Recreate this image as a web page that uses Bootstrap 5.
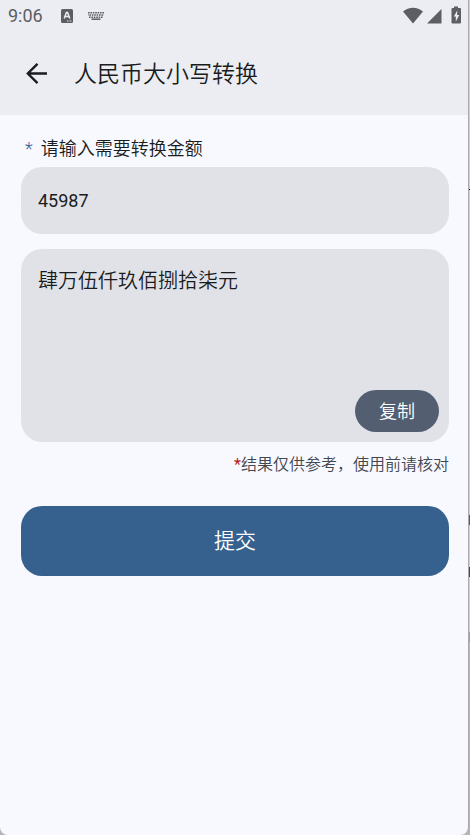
<!DOCTYPE html>
<html lang="zh-CN">
<head>
<meta charset="utf-8">
<meta name="viewport" content="width=device-width, initial-scale=1">
<title>人民币大小写转换</title>
<link rel="stylesheet" href="https://cdn.jsdelivr.net/npm/bootstrap@5.3.0/dist/css/bootstrap.min.css">
<style>
  body { background: #c9cacc; color: #191c20; font-family: Roboto, "Noto Sans CJK SC", sans-serif; }
  .backdrop { padding-right: 1px; background: linear-gradient(#d0d1d3 189px, #111 189px 190px, #d0d1d3 190px 515px, #4d6070 515px 525px, #d0d1d3 525px 567px, #33506b 567px 577px, #d0d1d3 577px 632px, #a0a1a3 632px 642px, #b4b6b8 642px); }
  .screen { background: #f8f9ff; border-right: 1px solid #a9aaad; border-radius: 0 0 8px 8px; }
  .top-area { background: #ecedf2; }
  .status-bar { height: 32px; padding: 0 6px 0 8px; color: #5c5e63; font-size: 18px; line-height: 32px; }
  .app-bar { height: 83px; padding: 0 21px; gap: 21px; }
  .app-title { font-size: 23px; line-height: 32px; font-weight: 350; padding-top: 2px; }
  .back-btn { color: #191c20; width: 32px; height: 32px; }
  .content { padding: 20px 19px 24px 21px; font-weight: 350; }
  .field-label { font-size: 18px; line-height: 28px; padding-left: 4px; gap: 8px; margin-bottom: 4px; }
  .star { color: #36618e; }
  .field, .field:focus { background: #e1e2e7; color: #191c20; border-radius: 21px; box-shadow: none; }
  .amount { height: 67px; padding: 16px 17px; font-size: 18px; margin-bottom: 15px; }
  .result, .result:focus { height: 193px; padding: 17px; font-size: 20px; line-height: 30px; resize: none; font-weight: 350; }
  .copy-btn, .copy-btn:hover { right: 10px; bottom: 10px; width: 84px; height: 42px; background: #535f70; color: #fff; font-size: 18px; font-weight: 350; }
  .note { font-size: 16px; line-height: 24px; margin: 11px 0 29px; color: #43474e; }
  .note-star { color: #ba1a1a; font-weight: 400; }
  .submit-btn, .submit-btn:hover { height: 70px; padding: 8px 0 6px; background: #36618e; color: #fff; font-size: 21px; font-weight: 350; border-radius: 21px; }
</style>
</head>
<body>
<div class="backdrop min-vh-100">
<div class="screen min-vh-100">
  <header class="top-area">
    <div class="status-bar d-flex align-items-center">
      <span>9:06</span>
      <svg class="ms-3" width="16" height="14" viewBox="0 0 16 14" aria-hidden="true">
        <rect x="2" y="0" width="12" height="14" rx="1.5" fill="#5c5e63"/>
        <path d="M5.200 9.500 7.400 3.500h1.200l2.200 6M6 7.500h4" fill="none" stroke="#ecedf2" stroke-width="1.5"/>
        <path d="M8 12h5" stroke="#ecedf2" stroke-width="1" stroke-dasharray="1 .6"/>
      </svg>
      <svg class="ms-2 me-auto" width="24" height="14" viewBox="0 0 24 14" aria-hidden="true">
        <g stroke="#5c5e63" stroke-width="1.5" fill="none">
          <path d="M5 3.750h16" stroke-dasharray="1.6 .8"/>
          <path d="M5 6h16" stroke-dasharray="1.6 .8" stroke-dashoffset="1"/>
          <path d="M6 8.200h14" stroke-dasharray="1.6 .8"/>
          <path d="M8.500 10.200h9"/>
        </g>
      </svg>
      <svg width="60" height="20" viewBox="0 0 60 20" fill="#5c5e63" aria-hidden="true">
        <path d="M1 5.500C6.500.4 15.500.4 21 5.500L11 17.500Z"/>
        <path d="M39.500 3V17.500H25Z"/>
        <path d="M52 .5h4V2h2q1 0 1 1V16.500q0 1-1 1h-7.500q-1 0-1-1V3q0-1 1-1H52Z"/>
        <path d="M55.300 4.500 51.800 10.500H53.800V15.500L57.300 9H55.100Z" fill="#ecedf2"/>
      </svg>
    </div>
    <div class="app-bar d-flex align-items-center">
      <button type="button" class="back-btn btn p-0 border-0 d-flex align-items-center justify-content-center" aria-label="返回">
        <svg width="22" height="22" viewBox="0 0 22 22" fill="none" stroke="currentColor" stroke-width="2.400" aria-hidden="true">
          <path d="M21 10.500H2M11.500.8 1.800 10.500l9.700 9.700"/>
        </svg>
      </button>
      <h1 class="app-title m-0">人民币大小写转换</h1>
    </div>
  </header>
  <main class="content">
    <form>
      <label for="amount" class="field-label d-flex"><span class="star">*</span><span>请输入需要转换金额</span></label>
      <input id="amount" type="text" inputmode="decimal" class="form-control border-0 field amount" value="45987">
      <div class="position-relative">
        <textarea id="result" class="form-control border-0 field result" aria-label="转换结果" readonly>肆万伍仟玖佰捌拾柒元</textarea>
        <button type="button" class="copy-btn btn rounded-pill border-0 p-0 position-absolute">复制</button>
      </div>
      <p class="note text-end"><span class="note-star">*</span>结果仅供参考，使用前请核对</p>
      <button type="submit" class="submit-btn btn border-0 w-100">提交</button>
    </form>
  </main>
</div>
</div>
<script src="https://cdn.jsdelivr.net/npm/bootstrap@5.3.0/dist/js/bootstrap.bundle.min.js"></script>
</body>
</html>
